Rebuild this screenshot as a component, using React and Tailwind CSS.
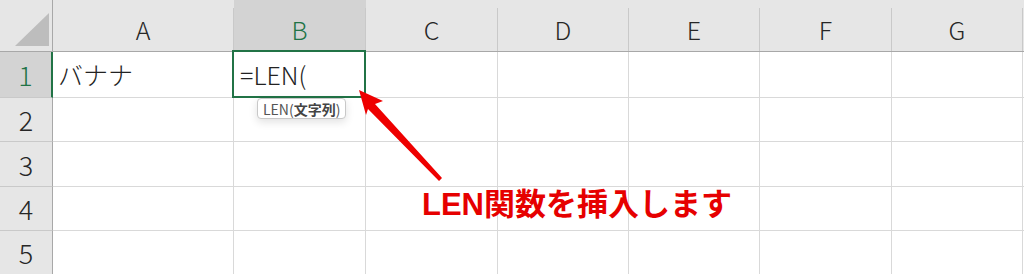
import React from 'react';

const cols = ['A', 'B', 'C', 'D', 'E', 'F', 'G'];
const rows = [1, 2, 3, 4, 5];
const font = { fontFamily: '"Noto Sans CJK JP", "Noto Sans", sans-serif' };

function ColHeader({ label, active }) {
  return (
    <div className={'flex flex-col border-b ' + (active ? 'bg-[#d3d3d3] border-[#217346] border-b-2' : 'bg-[#e6e6e6] border-[#a8a8a8]')}>
      <div className="mt-2 flex flex-1 items-center justify-center border-r border-[#c9c9c9]">
        <span className={'text-[25px] font-light leading-none ' + (active ? 'text-[#217346]' : 'text-[#262626]')}>{label}</span>
      </div>
    </div>
  );
}

function RowHeader({ n, active }) {
  return (
    <div className={'flex items-center justify-center border-b border-[#c9c9c9] ' + (active ? 'bg-[#d3d3d3] border-r-2 border-r-[#217346]' : 'bg-[#e6e6e6] border-r border-r-[#a8a8a8]')}>
      <span className={'text-[27px] font-light leading-none ' + (active ? 'text-[#217346]' : 'text-[#262626]')}>{n}</span>
    </div>
  );
}

export default function App() {
  return (
    <div className="relative h-[274px] w-[1024px] overflow-hidden bg-white" style={font}>
      <div className="grid grid-cols-[53px_181px_132px_132px_131px_131px_132px_131px_1fr] grid-rows-[52px_46px_44px_45px_44px_44px]">
        {/* corner */}
        <div className="border-b border-r border-[#a8a8a8] bg-[#e6e6e6]">
          <svg width="52" height="51" viewBox="0 0 52 51">
            <polygon points="15,46 49,46 49,13" fill="#bdbdbd" />
          </svg>
        </div>
        {cols.map(c => <ColHeader key={c} label={c} active={c === 'B'} />)}
        <div className="border-b border-[#a8a8a8] bg-[#e6e6e6]" />

        {rows.map(r => (
          <React.Fragment key={r}>
            <RowHeader n={r} active={r === 1} />
            {cols.map(c => {
              const sel = r === 1 && c === 'B';
              return (
                <div key={c} className="relative flex items-center border-b border-r border-[#d9d9d9]">
                  {r === 1 && c === 'A' && <span className="pl-[5px] text-[25px] font-light leading-none text-[#222]">バナナ</span>}
                  {sel && (
                    <>
                      <span className="pl-[6px] text-[25px] font-light leading-none text-[#222]">=LEN(</span>
                      <div className="absolute -left-[2px] -top-[2px] -right-[1px] -bottom-[1px] border-2 border-[#217346]" />
                      <div className="absolute left-[23px] top-[46px] z-10 flex h-[21px] items-center rounded-[4px] border border-[#c8c8c8] bg-white px-[5px] text-[14px] leading-none text-[#555] shadow-[0_3px_8px_rgba(0,0,0,0.12)]">
                        LEN(<b className="font-bold text-[#444]">文字列</b>)
                      </div>
                    </>
                  )}
                </div>
              );
            })}
            <div className="border-b border-[#d9d9d9]" />
          </React.Fragment>
        ))}
      </div>

      {/* annotation */}
      <svg className="pointer-events-none absolute left-0 top-0 z-20" width="1024" height="274">
        <polygon points="359,90 383,101 375,104 442,178 439,181 368,109 366,115" fill="#ee0000" />
      </svg>
      <div
        className="absolute left-[422px] top-[184px] z-20 whitespace-nowrap text-[31px] font-bold leading-[42px] text-[#e60000]"
        style={{ fontFamily: '"Liberation Sans", "Noto Sans CJK JP", sans-serif' }}
      >
        LEN関数を挿入します
      </div>
    </div>
  );
}
